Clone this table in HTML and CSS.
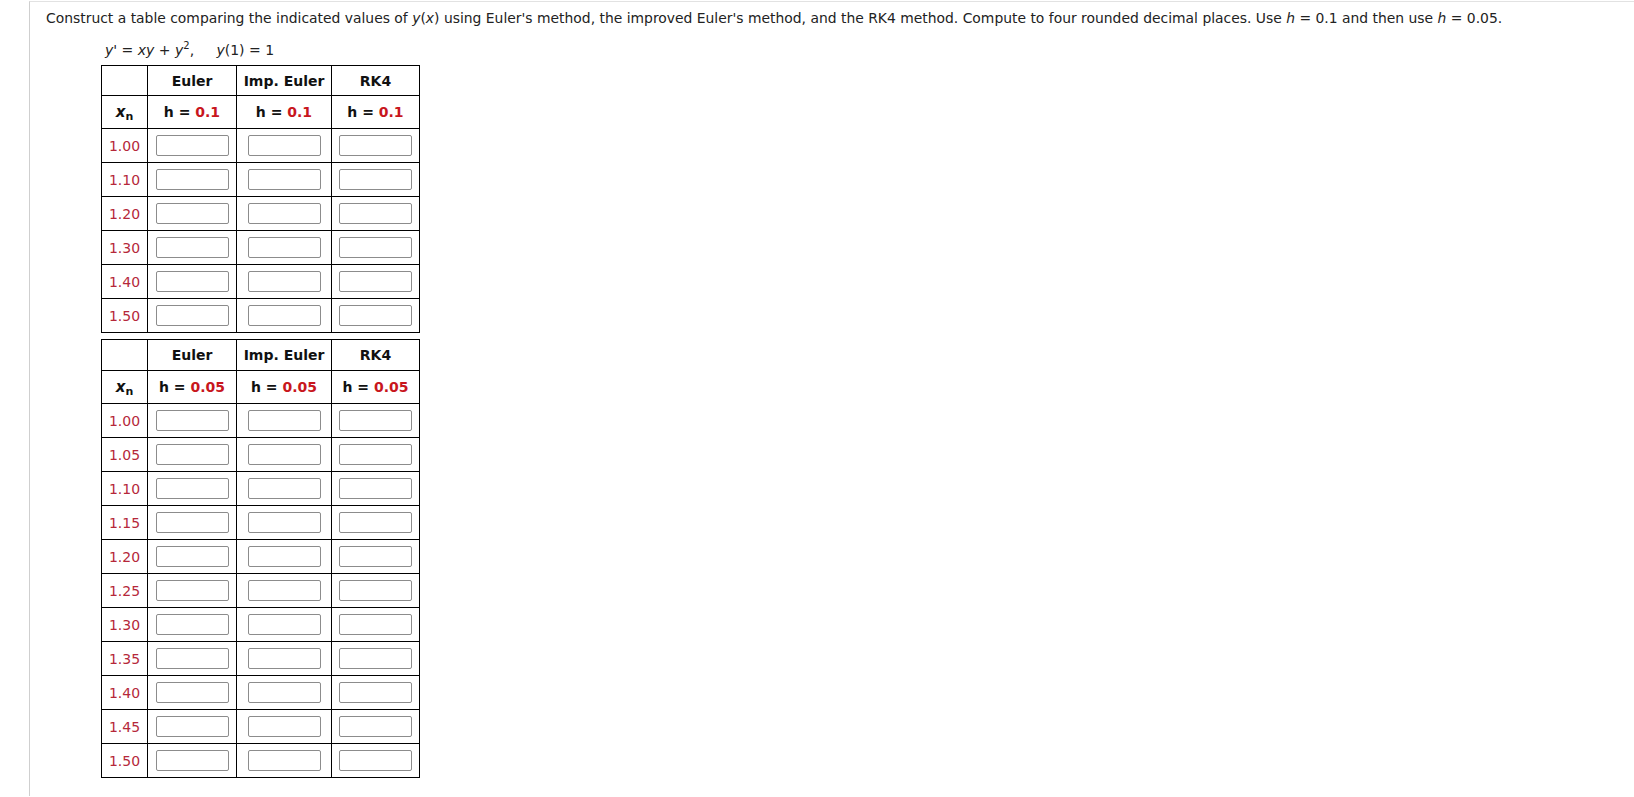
FILE: index.html
```html
<!DOCTYPE html>
<html>
<head>
<meta charset="utf-8">
<link rel="stylesheet" href="styles.css">
</head>
<body>
<div class="frame">
  <p class="question">Construct a table comparing the indicated values of <i>y</i>(<i>x</i>) using Euler's method, the improved Euler's method, and the RK4 method. Compute to four rounded decimal places. Use <i>h</i> = 0.1 and then use <i>h</i> = 0.05.</p>
  <p class="equation"><i>y</i>' = <i>xy</i> + <i>y</i><sup>2</sup>,&nbsp;&nbsp;&nbsp;&nbsp; <i>y</i>(1) = 1</p>

  <table class="grid">
    <colgroup><col class="c0"><col class="c1"><col class="c2"><col class="c3"></colgroup>
    <tr class="head"><th></th><th>Euler</th><th>Imp. Euler</th><th>RK4</th></tr>
    <tr class="step"><th><i>x</i><sub>n</sub></th><th>h = <span class="val">0.1</span></th><th>h = <span class="val">0.1</span></th><th>h = <span class="val">0.1</span></th></tr>
    <tr class="row"><td class="lab">1.00</td><td><span class="box"></span></td><td><span class="box"></span></td><td><span class="box"></span></td></tr>
    <tr class="row"><td class="lab">1.10</td><td><span class="box"></span></td><td><span class="box"></span></td><td><span class="box"></span></td></tr>
    <tr class="row"><td class="lab">1.20</td><td><span class="box"></span></td><td><span class="box"></span></td><td><span class="box"></span></td></tr>
    <tr class="row"><td class="lab">1.30</td><td><span class="box"></span></td><td><span class="box"></span></td><td><span class="box"></span></td></tr>
    <tr class="row"><td class="lab">1.40</td><td><span class="box"></span></td><td><span class="box"></span></td><td><span class="box"></span></td></tr>
    <tr class="row"><td class="lab">1.50</td><td><span class="box"></span></td><td><span class="box"></span></td><td><span class="box"></span></td></tr>
  </table>

  <table class="grid second">
    <colgroup><col class="c0"><col class="c1"><col class="c2"><col class="c3"></colgroup>
    <tr class="head"><th></th><th>Euler</th><th>Imp. Euler</th><th>RK4</th></tr>
    <tr class="step"><th><i>x</i><sub>n</sub></th><th>h = <span class="val">0.05</span></th><th>h = <span class="val">0.05</span></th><th>h = <span class="val">0.05</span></th></tr>
    <tr class="row"><td class="lab">1.00</td><td><span class="box"></span></td><td><span class="box"></span></td><td><span class="box"></span></td></tr>
    <tr class="row"><td class="lab">1.05</td><td><span class="box"></span></td><td><span class="box"></span></td><td><span class="box"></span></td></tr>
    <tr class="row"><td class="lab">1.10</td><td><span class="box"></span></td><td><span class="box"></span></td><td><span class="box"></span></td></tr>
    <tr class="row"><td class="lab">1.15</td><td><span class="box"></span></td><td><span class="box"></span></td><td><span class="box"></span></td></tr>
    <tr class="row"><td class="lab">1.20</td><td><span class="box"></span></td><td><span class="box"></span></td><td><span class="box"></span></td></tr>
    <tr class="row"><td class="lab">1.25</td><td><span class="box"></span></td><td><span class="box"></span></td><td><span class="box"></span></td></tr>
    <tr class="row"><td class="lab">1.30</td><td><span class="box"></span></td><td><span class="box"></span></td><td><span class="box"></span></td></tr>
    <tr class="row"><td class="lab">1.35</td><td><span class="box"></span></td><td><span class="box"></span></td><td><span class="box"></span></td></tr>
    <tr class="row"><td class="lab">1.40</td><td><span class="box"></span></td><td><span class="box"></span></td><td><span class="box"></span></td></tr>
    <tr class="row"><td class="lab">1.45</td><td><span class="box"></span></td><td><span class="box"></span></td><td><span class="box"></span></td></tr>
    <tr class="row"><td class="lab">1.50</td><td><span class="box"></span></td><td><span class="box"></span></td><td><span class="box"></span></td></tr>
  </table>
</div>
</body>
</html>
```

FILE: styles.css
```css
html, body {
  margin: 0;
  padding: 0;
  background: #fff;
}
body {
  font-family: "DejaVu Sans", Verdana, sans-serif;
  font-size: 14px;
  color: #222;
}
.frame {
  margin: 1px 0 0 29px;
  border-top: 1px solid #e2e2e2;
  border-left: 1px solid #cfcfcf;
  min-height: 795px;
  box-sizing: border-box;
  padding: 8px 0 0 16px;
}
.question {
  margin: 0;
  font-size: 13.9px;
  line-height: 17px;
}
.equation {
  margin: 15px 0 0 59px;
  line-height: 17px;
}
.equation sup {
  font-size: 10px;
  line-height: 0;
  vertical-align: 6px;
}
.grid {
  margin: 6px 0 0 55px;
  border-collapse: collapse;
  table-layout: fixed;
  width: 319px;
  border: 1px solid #000;
}
.grid.second {
  margin-top: 6px;
}
.c0 { width: 46px; }
.c1 { width: 89px; }
.c2 { width: 95px; }
.c3 { width: 88px; }
.grid th, .grid td {
  border: 1px solid #000;
  padding: 0;
  text-align: center;
  vertical-align: middle;
}
.grid th {
  font-weight: bold;
  color: #111;
}
.head th { height: 29px; }
.second .head th { height: 30px; }
.step th { height: 32px; }
.row td { height: 33px; }
.step sub {
  font-size: 11px;
  line-height: 0;
  vertical-align: -3px;
}
.step i {
  font-size: 15px;
}
.val {
  color: #c8161d;
}
.lab {
  color: #b5283a;
}
.box {
  display: block;
  margin: 0 auto;
  width: 73px;
  height: 21px;
  box-sizing: border-box;
  border: 1px solid #8c8c8c;
  border-radius: 2px;
  background: #fff;
}
```
